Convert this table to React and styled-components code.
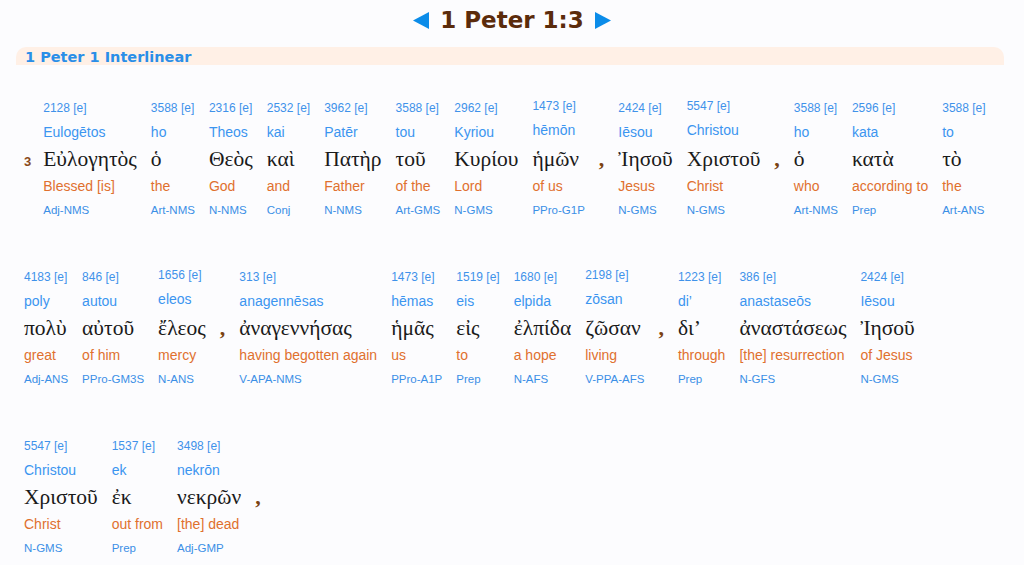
import React from "react";
import styled, { createGlobalStyle } from "styled-components";

// Page wide defaults
const GlobalStyle = createGlobalStyle`
  body {
    margin: 0;
    background: #fcfcfe;
    font-family: "Liberation Sans", Arial, sans-serif;
  }
`;

// Words of the verse, in reading order
const words = [
  { s: "2128", t: "Eulogētos", g: "Εὐλογητὸς", e: "Blessed [is]", p: "Adj-NMS" },
  { s: "3588", t: "ho", g: "ὁ", e: "the", p: "Art-NMS" },
  { s: "2316", t: "Theos", g: "Θεὸς", e: "God", p: "N-NMS" },
  { s: "2532", t: "kai", g: "καὶ", e: "and", p: "Conj" },
  { s: "3962", t: "Patēr", g: "Πατὴρ", e: "Father", p: "N-NMS" },
  { s: "3588", t: "tou", g: "τοῦ", e: "of the", p: "Art-GMS" },
  { s: "2962", t: "Kyriou", g: "Κυρίου", e: "Lord", p: "N-GMS" },
  { s: "1473", t: "hēmōn", g: "ἡμῶν", e: "of us", p: "PPro-G1P", punct: ",", raised: true },
  { s: "2424", t: "Iēsou", g: "Ἰησοῦ", e: "Jesus", p: "N-GMS" },
  { s: "5547", t: "Christou", g: "Χριστοῦ", e: "Christ", p: "N-GMS", punct: ",", raised: true },
  { s: "3588", t: "ho", g: "ὁ", e: "who", p: "Art-NMS" },
  { s: "2596", t: "kata", g: "κατὰ", e: "according to", p: "Prep" },
  { s: "3588", t: "to", g: "τὸ", e: "the", p: "Art-ANS" },
  { s: "4183", t: "poly", g: "πολὺ", e: "great", p: "Adj-ANS" },
  { s: "846", t: "autou", g: "αὐτοῦ", e: "of him", p: "PPro-GM3S" },
  { s: "1656", t: "eleos", g: "ἔλεος", e: "mercy", p: "N-ANS", punct: ",", raised: true },
  { s: "313", t: "anagennēsas", g: "ἀναγεννήσας", e: "having begotten again", p: "V-APA-NMS" },
  { s: "1473", t: "hēmas", g: "ἡμᾶς", e: "us", p: "PPro-A1P" },
  { s: "1519", t: "eis", g: "εἰς", e: "to", p: "Prep" },
  { s: "1680", t: "elpida", g: "ἐλπίδα", e: "a hope", p: "N-AFS" },
  { s: "2198", t: "zōsan", g: "ζῶσαν", e: "living", p: "V-PPA-AFS", punct: ",", raised: true },
  { s: "1223", t: "di’", g: "δι’", e: "through", p: "Prep" },
  { s: "386", t: "anastaseōs", g: "ἀναστάσεως", e: "[the] resurrection", p: "N-GFS" },
  { s: "2424", t: "Iēsou", g: "Ἰησοῦ", e: "of Jesus", p: "N-GMS" },
  { s: "5547", t: "Christou", g: "Χριστοῦ", e: "Christ", p: "N-GMS" },
  { s: "1537", t: "ek", g: "ἐκ", e: "out from", p: "Prep" },
  { s: "3498", t: "nekrōn", g: "νεκρῶν", e: "[the] dead", p: "Adj-GMP", punct: "," },
];

// Little blue triangle used for prev / next verse
const Arrow = ({ dir }) => (
  <NavArrow href="#" aria-label={dir === "left" ? "previous" : "next"}>
    <svg width="16" height="17" viewBox="0 0 16 17">
      {dir === "left"
        ? <polygon points="16,0 16,17 0,8.5" fill="#0b8ce9" />
        : <polygon points="0,0 0,17 16,8.5" fill="#0b8ce9" />}
    </svg>
  </NavArrow>
);

const App = () => {
  return (
    <>
      <GlobalStyle />
      <TitleBar>
        <Arrow dir="left" />
        <Title>1 Peter 1:3</Title>
        <Arrow dir="right" />
      </TitleBar>

      <Banner>
        <BannerTitle>1 Peter 1 Interlinear</BannerTitle>
      </Banner>

      <Verse>
        <WordCol>
          <Strongs />
          <Translit />
          <Greek><VerseNum>3</VerseNum></Greek>
        </WordCol>
        {words.map((w, i) => (
          <React.Fragment key={i}>
            <WordCol>
              <Strongs $raised={w.raised}>{w.s} [e]</Strongs>
              <Translit $raised={w.raised}>{w.t}</Translit>
              <Greek>{w.g}</Greek>
              <English>{w.e}</English>
              <Parse>{w.p}</Parse>
            </WordCol>
            {w.punct && (
              <WordCol>
                <Strongs />
                <Translit />
                <Greek><Punct>{w.punct}</Punct></Greek>
              </WordCol>
            )}
          </React.Fragment>
        ))}
      </Verse>
    </>
  );
};

export default App;

const TitleBar = styled.div`
  display: flex;
  justify-content: center;
  align-items: center;
  gap: 11px;
  height: 40px;
`;

const NavArrow = styled.a`
  display: flex;
  align-items: center;
`;

const Title = styled.h1`
  margin: 0;
  font-family: "DejaVu Sans", Verdana, sans-serif;
  font-weight: bold;
  font-size: 23px;
  color: #5b2b0b;
`;

const Banner = styled.div`
  margin: 7px 20px 0 16px;
  height: 18px;
  background: #fff0e6;
  border-radius: 10px 10px 0 0;
  display: flex;
  align-items: center;
  padding-left: 9px;
`;

const BannerTitle = styled.div`
  font-family: "DejaVu Sans", Verdana, sans-serif;
  font-weight: bold;
  font-size: 14.5px;
  color: #2a8ee8;
  padding-top: 1px;
`;

const Verse = styled.div`
  display: flex;
  flex-wrap: wrap;
  align-items: flex-start;
  row-gap: 45px;
  margin: 32px 16px 0 24px;
`;

const WordCol = styled.div`
  display: flex;
  flex-direction: column;
  margin-right: 14px;
  white-space: nowrap;
`;

const Strongs = styled.div`
  height: 22px;
  line-height: ${(p) => (p.$raised ? "18px" : "22px")};
  font-size: 12px;
  color: #3f92ea;
`;

const Translit = styled.div`
  height: 26px;
  line-height: ${(p) => (p.$raised ? "22px" : "26px")};
  font-size: 14px;
  color: #3b95f0;
`;

const Greek = styled.div`
  height: 28px;
  line-height: 28px;
  font-family: "Liberation Serif", "DejaVu Serif", "Times New Roman", serif;
  font-size: 21.5px;
  color: #1a1a1a;
`;

const English = styled.div`
  height: 26px;
  line-height: 26px;
  font-size: 14px;
  color: #e0702e;
`;

const Parse = styled.div`
  height: 22px;
  line-height: 22px;
  font-size: 11.5px;
  color: #3b8fe6;
`;

const VerseNum = styled.span`
  font-family: "Liberation Sans", Arial, sans-serif;
  font-weight: bold;
  font-size: 13px;
  color: #8a4a1a;
  margin-right: -2px;
`;

const Punct = styled.span`
  font-weight: bold;
  color: #7a4212;
  font-size: 22px;
`;
